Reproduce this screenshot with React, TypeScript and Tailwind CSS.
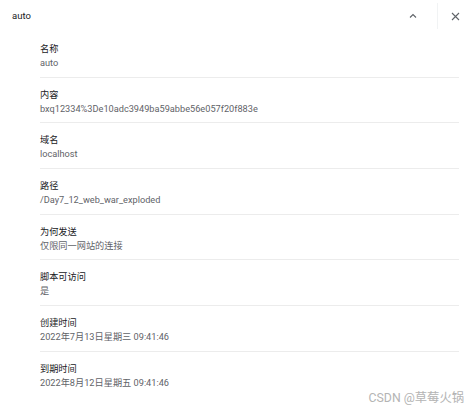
import React from 'react';

const FIELDS = [
  { label: '名称', value: 'auto' },
  { label: '内容', value: 'bxq12334%3De10adc3949ba59abbe56e057f20f883e' },
  { label: '域名', value: 'localhost' },
  { label: '路径', value: '/Day7_12_web_war_exploded' },
  { label: '为何发送', value: '仅限同一网站的连接' },
  { label: '脚本可访问', value: '是' },
  { label: '创建时间', value: '2022年7月13日星期三 09:41:46' },
  { label: '到期时间', value: '2022年8月12日星期五 09:41:46' },
];

export default function App() {
  return (
    <div
      className="relative w-[474px] h-[410px] bg-white overflow-hidden"
      style={{ fontFamily: 'Roboto, "Noto Sans CJK SC", sans-serif' }}
    >
      {/* Header */}
      <div className="flex items-center h-[32px] pl-[12px] pr-[1px]">
        <span className="flex-1 text-[9.5px] leading-none text-[#202124]">auto</span>
        <button className="w-[24px] h-[24px] flex items-center justify-center mr-[12px] text-[#5f6368]">
          <svg width="8" height="6" viewBox="0 0 8 6" fill="none" stroke="currentColor" strokeWidth="1.1">
            <path d="M1 4.5 L4 1.5 L7 4.5" />
          </svg>
        </button>
        <div className="w-px h-[26px] bg-[#f1f3f4]" />
        <button className="w-[35px] h-[24px] flex items-center justify-center text-[#5f6368]">
          <svg width="9" height="9" viewBox="0 0 9 9" fill="none" stroke="currentColor" strokeWidth="1.1">
            <path d="M1 1 L8 8 M8 1 L1 8" />
          </svg>
        </button>
      </div>

      {/* Details */}
      <div className="pl-[40px] pr-[15px]">
        {FIELDS.map((f, i) => (
          <div
            key={f.label}
            className={`h-[45.67px] pt-[10px] ${i < FIELDS.length - 1 ? 'border-b border-[#ececec]' : ''}`}
          >
            <div className="text-[9.2px] leading-[13px] text-[#202124]">{f.label}</div>
            <div className="text-[9.2px] leading-[15px] text-[#5f6368]">{f.value}</div>
          </div>
        ))}
      </div>

      {/* Watermark */}
      <div className="absolute right-[10px] bottom-[6px] text-[12.3px] leading-none text-[#b4b4b4]">
        CSDN @草莓火锅
      </div>
    </div>
  );
}
